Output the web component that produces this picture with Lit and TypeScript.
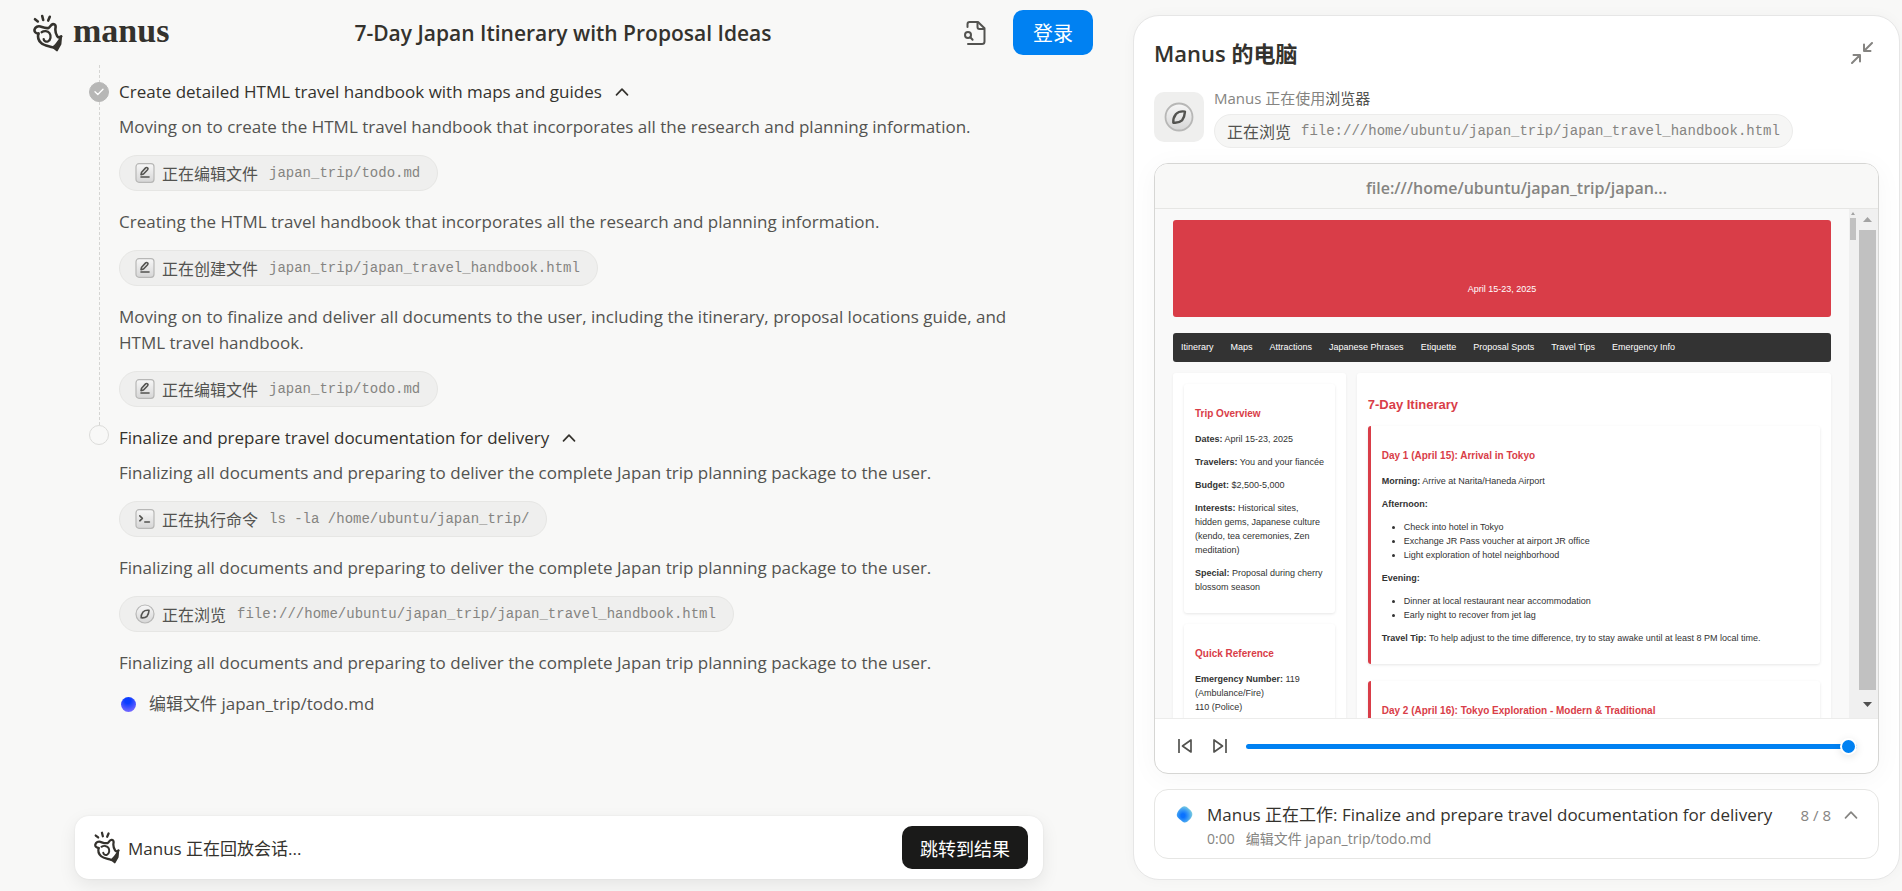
import { LitElement, html, css, svg, nothing } from "lit";
import { customElement, property } from "lit/decorators.js";

const HANDBOOK_URL = "file:///home/ubuntu/japan_trip/japan_travel_handbook.html";
const FINALIZING =
  "Finalizing all documents and preparing to deliver the complete Japan trip planning package to the user.";

type ToolKind = "edit" | "terminal" | "browser";

interface Entry {
  text: string;
  tool?: ToolKind;
  action?: string;
  target?: string;
}

interface Step {
  title: string;
  done: boolean;
  entries: Entry[];
}

const STEPS: Step[] = [
  {
    title: "Create detailed HTML travel handbook with maps and guides",
    done: true,
    entries: [
      {
        text: "Moving on to create the HTML travel handbook that incorporates all the research and planning information.",
        tool: "edit",
        action: "正在编辑文件",
        target: "japan_trip/todo.md",
      },
      {
        text: "Creating the HTML travel handbook that incorporates all the research and planning information.",
        tool: "edit",
        action: "正在创建文件",
        target: "japan_trip/japan_travel_handbook.html",
      },
      {
        text: "Moving on to finalize and deliver all documents to the user, including the itinerary, proposal locations guide, and HTML travel handbook.",
        tool: "edit",
        action: "正在编辑文件",
        target: "japan_trip/todo.md",
      },
    ],
  },
  {
    title: "Finalize and prepare travel documentation for delivery",
    done: false,
    entries: [
      { text: FINALIZING, tool: "terminal", action: "正在执行命令", target: "ls -la /home/ubuntu/japan_trip/" },
      { text: FINALIZING, tool: "browser", action: "正在浏览", target: HANDBOOK_URL },
      { text: FINALIZING },
    ],
  },
];

const NAV = [
  "Itinerary",
  "Maps",
  "Attractions",
  "Japanese Phrases",
  "Etiquette",
  "Proposal Spots",
  "Travel Tips",
  "Emergency Info",
];

const chevronUp = (size: number) => svg`
  <svg width=${size} height=${size} viewBox="0 0 16 16" fill="none" stroke="currentColor" stroke-width="1.7" stroke-linecap="round" stroke-linejoin="round" aria-hidden="true">
    <path d="M2.5 10.8 8 5.2l5.5 5.6" />
  </svg>`;

const hand = (width: number, height: number) => svg`
  <svg width=${width} height=${height} viewBox="0 0 30 38" fill="none" stroke="#34322d" stroke-width="2.6" stroke-linecap="round" stroke-linejoin="round" aria-hidden="true">
    <path d="M2 5.2 4.8 7.4M9.2 2 10.2 6M16.8 2.8 15.2 6.6" />
    <path d="M5.4 19.6C2.6 19.4 1 17.6 1.6 15.4c.7-2.6 3.4-3.6 5.8-2.9 2.6.8 5.4 2.2 8.2 1.4 1.8-.6 2-3.6 4.4-3.8 2.3-.1 2.9 1.6 2.5 3.8-.5 3 .2 5.6 1.7 8.2 1 1.7 2 1.5 4 .3" />
    <path d="M5.4 19.600c-.9 3 .1 7 2.900 9.500 2.800 2.600 7.500 2.800 11.700 4.300" />
    <path d="M28.300 22.400 27.600 30.200 24 36.600 19.600 33.200C22.500 32 25 28 28.300 22.400Z" fill="#34322d" stroke-width="1.6" />
    <path d="M8.600 18.200c2.400-1.600 6.200-1.500 7.900.9 1.900 2.700 1.200 7-1.400 8.200-2.200.8-4.300-.4-4.400-2.200" stroke-width="2.3" />
  </svg>`;

@customElement("tool-icon")
class ToolIcon extends LitElement {
  static styles = css`
    :host {
      display: inline-flex;
    }
  `;

  @property() kind: ToolKind = "edit";
  @property({ type: Number }) size = 20;

  render() {
    const glyphs = {
      edit: svg`<path d="M6 11.600 6.600 9.200 10.600 4.900c.6-.6 1.500-.6 2 0 .5.500.5 1.300 0 1.800L8.500 11Z"/><path d="M6 14h8"/>`,
      terminal: svg`<path d="M4.800 6.800 7.400 9.300 4.800 11.800"/><path d="M9.800 13h4.600"/>`,
      browser: svg`<path d="M8 8C9.500 6.500 12 6.100 14 6.400 13.900 8 13 11 12 12.300 10.500 13.700 8 14 6.200 13.800 6 12 7 9.300 8 8Z"/>`,
    };
    return html`<svg width=${this.size} height=${this.size} viewBox="0 0 20 20" aria-hidden="true">
      <defs>
        <linearGradient id="face" x1="0" y1="0" x2="0" y2="1">
          <stop offset="0" stop-color="#f7f7f7" />
          <stop offset="1" stop-color="#d6d6d6" />
        </linearGradient>
      </defs>
      ${this.kind === "browser"
        ? svg`<circle cx="10" cy="10" r="9" fill="url(#face)" stroke="#b7b7b6" stroke-width="1.2"/>`
        : svg`<rect x="1" y="0.7" width="18" height="18.6" rx="3" fill="url(#face)" stroke="#b7b7b6" stroke-width="1.2"/>`}
      <g fill="none" stroke="#535350" stroke-width="1.6" stroke-linecap="round" stroke-linejoin="round">
        ${glyphs[this.kind]}
      </g>
    </svg>`;
  }
}

@customElement("task-timeline")
class TaskTimeline extends LitElement {
  static styles = css`
    :host {
      display: block;
      color: #535350;
    }
    .step {
      display: grid;
      grid-template-columns: 20px minmax(0, 1fr);
      column-gap: 10px;
    }
    .rail {
      display: flex;
      flex-direction: column;
      align-items: center;
    }
    .dash {
      width: 1px;
      background: repeating-linear-gradient(#d5d5d3 0 3px, transparent 3px 5px);
    }
    .lead {
      height: 17px;
    }
    .rest {
      flex: 1;
    }
    .mark {
      box-sizing: border-box;
      width: 20px;
      height: 20px;
      flex: none;
      border-radius: 50%;
      border: 1px solid #dcdcda;
      display: flex;
      align-items: center;
      justify-content: center;
    }
    .mark.done {
      background: #b7b7b6;
      border-color: #b7b7b6;
    }
    .body.first {
      padding-top: 14px;
    }
    .title {
      display: flex;
      align-items: center;
      gap: 12px;
      padding: 0;
      border: 0;
      background: none;
      font: inherit;
      line-height: 26px;
      color: #34322d;
      cursor: pointer;
      margin-bottom: 9px;
    }
    .text {
      margin: 0 0 15px;
      line-height: 26px;
      max-width: 900px;
    }
    .pill {
      display: flex;
      width: fit-content;
      align-items: center;
      box-sizing: border-box;
      height: 36px;
      max-width: 100%;
      padding: 0 17px 0 15px;
      border: 1px solid #e6e6e4;
      border-radius: 18px;
      background: #efefee;
      font-size: 16px;
      margin-bottom: 18px;
    }
    .action {
      margin: 0 11px 0 7px;
      white-space: nowrap;
    }
    code {
      font: 14px "Liberation Mono", monospace;
      color: #858481;
      white-space: nowrap;
      overflow: hidden;
      text-overflow: ellipsis;
    }
    .live {
      display: flex;
      align-items: center;
      gap: 13px;
      line-height: 26px;
      padding-left: 2px;
    }
    .orb {
      width: 15px;
      height: 15px;
      border-radius: 50%;
      background: radial-gradient(circle at 45% 25%, #0a3dff 20%, #4a55ff 55%, #9a7bff 100%);
    }
  `;

  render() {
    return html`${STEPS.map(
      (step, i) => html`<section class="step">
        <div class="rail">
          ${i === 0 ? html`<div class="dash lead"></div>` : nothing}
          <div class="mark ${step.done ? "done" : ""}">
            ${step.done
              ? svg`<svg width="12" height="12" viewBox="0 0 12 12" fill="none" stroke="#fff" stroke-width="1.3" stroke-linecap="round" stroke-linejoin="round" aria-hidden="true"><path d="M2 5.800 4.800 8.500 10 3.200"/></svg>`
              : nothing}
          </div>
          ${step.done ? html`<div class="dash rest"></div>` : nothing}
        </div>
        <div class="body ${i === 0 ? "first" : ""}">
          <button class="title" type="button" aria-expanded="true">${step.title}${chevronUp(16)}</button>
          ${step.entries.map(
            (e) => html`<p class="text">${e.text}</p>
              ${e.tool
                ? html`<div class="pill">
                    <tool-icon .kind=${e.tool}></tool-icon><span class="action">${e.action}</span
                    ><code>${e.target}</code>
                  </div>`
                : nothing}`
          )}
          ${step.done ? nothing : html`<div class="live"><span class="orb"></span>编辑文件 japan_trip/todo.md</div>`}
        </div>
      </section>`
    )}`;
  }
}

@customElement("handbook-page")
class HandbookPage extends LitElement {
  static styles = css`
    :host {
      display: block;
      font: 9px/14px "Liberation Sans", Arial, sans-serif;
      color: #333;
      background: #f9f9f9;
      padding: 11px 18px 0;
      overflow: hidden;
    }
    .hero {
      height: 97px;
      box-sizing: border-box;
      padding-top: 62px;
      border-radius: 3px;
      background: #d93d48;
      color: #fff;
      text-align: center;
    }
    nav {
      display: flex;
      gap: 17px;
      margin: 16px 0 11px;
      padding: 7px 8px 8px;
      border-radius: 3px;
      background: #333;
    }
    nav a {
      color: #fff;
      text-decoration: none;
      white-space: nowrap;
    }
    .cols {
      display: grid;
      grid-template-columns: 173fr 475fr;
      gap: 11px;
    }
    .side,
    .main {
      background: #fff;
      border-radius: 3px;
      padding: 11px;
      box-shadow: 0 1px 3px rgba(0, 0, 0, 0.06);
    }
    .box {
      border-radius: 3px;
      box-shadow: 0 1px 3px rgba(0, 0, 0, 0.1);
      padding: 22px 8px 19px 11px;
      margin-bottom: 11px;
    }
    .day {
      border-left: 3px solid #d93d48;
      margin-bottom: 17px;
      padding-bottom: 19px;
    }
    h2,
    h3 {
      margin: 0;
      color: #d93d48;
    }
    h2 {
      font-size: 13px;
      line-height: 20px;
      margin: 11px 0;
    }
    h3 {
      font-size: 10px;
      line-height: 16px;
      margin-bottom: 10px;
    }
    p,
    ul {
      margin: 0 0 9px;
    }
    p:last-child {
      margin-bottom: 0;
    }
    ul {
      padding-left: 22px;
    }
  `;

  render() {
    return html`
      <div class="hero">April 15-23, 2025</div>
      <nav>${NAV.map((n) => html`<a href="#">${n}</a>`)}</nav>
      <div class="cols">
        <div class="side">
          <div class="box">
            <h3>Trip Overview</h3>
            <p><b>Dates:</b> April 15-23, 2025</p>
            <p><b>Travelers:</b> You and your fiancée</p>
            <p><b>Budget:</b> $2,500-5,000</p>
            <p><b>Interests:</b> Historical sites, hidden gems, Japanese culture (kendo, tea ceremonies, Zen meditation)</p>
            <p><b>Special:</b> Proposal during cherry blossom season</p>
          </div>
          <div class="box">
            <h3>Quick Reference</h3>
            <p><b>Emergency Number:</b> 119 (Ambulance/Fire)<br />110 (Police)</p>
          </div>
        </div>
        <div class="main">
          <h2>7-Day Itinerary</h2>
          <div class="box day">
            <h3>Day 1 (April 15): Arrival in Tokyo</h3>
            <p><b>Morning:</b> Arrive at Narita/Haneda Airport</p>
            <p><b>Afternoon:</b></p>
            <ul>
              <li>Check into hotel in Tokyo</li>
              <li>Exchange JR Pass voucher at airport JR office</li>
              <li>Light exploration of hotel neighborhood</li>
            </ul>
            <p><b>Evening:</b></p>
            <ul>
              <li>Dinner at local restaurant near accommodation</li>
              <li>Early night to recover from jet lag</li>
            </ul>
            <p><b>Travel Tip:</b> To help adjust to the time difference, try to stay awake until at least 8 PM local time.</p>
          </div>
          <div class="box day">
            <h3>Day 2 (April 16): Tokyo Exploration - Modern &amp; Traditional</h3>
          </div>
        </div>
      </div>
    `;
  }
}

@customElement("computer-panel")
class ComputerPanel extends LitElement {
  static styles = css`
    :host {
      display: flex;
      flex-direction: column;
      box-sizing: border-box;
      padding: 23px 20px 20px;
      background: #fff;
      border: 1px solid #e6e6e6;
      border-radius: 26px;
      box-shadow: 0 0 14px rgba(0, 0, 0, 0.03);
      min-width: 0;
      min-height: 0;
    }
    .head {
      display: flex;
      justify-content: space-between;
      align-items: center;
      margin-bottom: 25px;
    }
    h2 {
      margin: 0;
      font-size: 22px;
      line-height: 28px;
      font-weight: 600;
      color: #34322d;
    }
    button {
      display: inline-flex;
      padding: 0;
      border: 0;
      background: none;
      color: #535350;
      cursor: pointer;
    }
    .shrink {
      margin-right: 6px;
      color: #858481;
    }
    .status {
      display: flex;
      align-items: flex-start;
      gap: 10px;
      margin-bottom: 15px;
    }
    .app {
      width: 50px;
      height: 50px;
      flex: none;
      display: flex;
      align-items: center;
      justify-content: center;
      border-radius: 10px;
      background: #efefee;
    }
    .using {
      font-size: 15px;
      line-height: 20px;
      color: #858481;
      margin-bottom: 6px;
    }
    .using span,
    .action {
      color: #535350;
    }
    .info {
      min-width: 0;
      margin-top: -4px;
    }
    .pill {
      display: flex;
      width: fit-content;
      align-items: center;
      gap: 10px;
      box-sizing: border-box;
      max-width: 100%;
      height: 34px;
      padding: 0 12px;
      border: 1px solid #ececeb;
      border-radius: 17px;
      background: #f6f6f5;
      font-size: 16px;
      white-space: nowrap;
    }
    code {
      font: 14px "Liberation Mono", monospace;
      color: #858481;
      overflow: hidden;
      text-overflow: ellipsis;
    }
    .window {
      flex: 1;
      min-height: 0;
      display: flex;
      flex-direction: column;
      border: 1px solid #d6d6d4;
      border-radius: 14px;
      overflow: hidden;
      box-shadow: 0 4px 28px rgba(0, 0, 0, 0.04);
      background: #fff;
    }
    .address {
      height: 44px;
      line-height: 48px;
      flex: none;
      text-align: center;
      font-size: 16px;
      font-weight: 600;
      color: #858481;
      background: #f8f8f7;
      border-bottom: 1px solid #e6e6e4;
    }
    .view {
      flex: 1;
      min-height: 0;
      display: flex;
    }
    handbook-page {
      flex: 1;
      min-width: 0;
    }
    .bars {
      display: flex;
      background: #f0f0f0;
      gap: 3px;
      padding: 0 2px 0 1px;
    }
    .bar {
      display: flex;
      flex-direction: column;
      align-items: center;
    }
    .inner {
      width: 6px;
      padding-top: 3px;
      gap: 3px;
    }
    .inner .thumb {
      width: 6px;
      height: 22px;
      background: #c1c1c1;
    }
    .outer {
      width: 17px;
      justify-content: space-between;
    }
    .outer .thumb {
      width: 17px;
      flex: 1;
      background: #c1c1c1;
    }
    .arrow {
      height: 21px;
      display: flex;
      align-items: center;
    }
    .arrow.down {
      height: 28px;
      align-items: center;
    }
    .player {
      height: 54px;
      flex: none;
      display: flex;
      align-items: center;
      gap: 18px;
      padding: 0 21px 0 21px;
      border-top: 1px solid #ececeb;
    }
    .player button {
      width: 17px;
      justify-content: center;
    }
    input[type="range"] {
      appearance: none;
      flex: 1;
      min-width: 0;
      height: 18px;
      margin: 0;
      background: none;
    }
    input[type="range"]::-webkit-slider-runnable-track {
      height: 5px;
      border-radius: 3px;
      background: #0081f2;
    }
    input[type="range"]::-webkit-slider-thumb {
      appearance: none;
      box-sizing: border-box;
      width: 17px;
      height: 17px;
      margin-top: -6px;
      border-radius: 50%;
      border: 2px solid #fff;
      background: #0081f2;
      box-shadow: 0 2px 8px rgba(0, 0, 0, 0.1);
    }
    .task {
      flex: none;
      display: grid;
      grid-template-columns: 20px minmax(0, 1fr) auto auto;
      align-items: center;
      margin-top: 15px;
      padding: 12px 19px 8px 20px;
      border: 1px solid #e6e6e4;
      border-radius: 14px;
      background: #fff;
    }
    .name {
      padding-left: 12px;
      font-size: 17px;
      line-height: 26px;
      color: #34322d;
      white-space: nowrap;
    }
    .count {
      font-size: 15px;
      line-height: 26px;
      color: #858481;
      margin-right: 12px;
    }
    .task button {
      color: #858481;
    }
    .meta {
      grid-column: 2;
      padding-left: 12px;
      font-size: 14px;
      line-height: 22px;
      color: #858481;
      display: flex;
      gap: 11px;
    }
  `;

  render() {
    return html`
      <div class="head">
        <h2>Manus 的电脑</h2>
        <button class="shrink" type="button" aria-label="最小化">
          <svg width="22" height="22" viewBox="0 0 22 22" fill="none" stroke="currentColor" stroke-width="2" stroke-linecap="round" stroke-linejoin="round">
            <path d="M21 1 13.500 8.500M13 2.500V9h6.500M1 21 8.500 13.500M9 19.500V13H2.500" />
          </svg>
        </button>
      </div>
      <div class="status">
        <div class="app"><tool-icon .kind=${"browser"} .size=${30}></tool-icon></div>
        <div class="info">
          <div class="using">Manus 正在使用<span>浏览器</span></div>
          <div class="pill"><span class="action">正在浏览</span><code>${HANDBOOK_URL}</code></div>
        </div>
      </div>
      <div class="window">
        <div class="address">file:///home/ubuntu/japan_trip/japan...</div>
        <div class="view">
          <handbook-page></handbook-page>
          <div class="bars">
            <div class="bar inner">
              <svg width="4" height="3" viewBox="0 0 4 3"><path d="M0 3 2 0l2 3z" fill="#a3a3a3" /></svg>
              <div class="thumb"></div>
            </div>
            <div class="bar outer">
              <div class="arrow"><svg width="9" height="5" viewBox="0 0 9 5"><path d="M0 5 4.500 0 9 5z" fill="#a3a3a3" /></svg></div>
              <div class="thumb"></div>
              <div class="arrow down"><svg width="9" height="5" viewBox="0 0 9 5"><path d="M0 0h9L4.500 5z" fill="#505050" /></svg></div>
            </div>
          </div>
        </div>
        <div class="player">
          <button type="button" aria-label="上一步">
            <svg width="16" height="16" viewBox="0 0 16 16" fill="none" stroke="currentColor" stroke-width="1.7" stroke-linejoin="round"><path d="M2 1v14M14 2v12L5.500 8z" /></svg>
          </button>
          <button type="button" aria-label="下一步">
            <svg width="16" height="16" viewBox="0 0 16 16" fill="none" stroke="currentColor" stroke-width="1.7" stroke-linejoin="round"><path d="M14 1v14M2 2v12L10.500 8z" /></svg>
          </button>
          <input type="range" min="0" max="100" value="100" aria-label="回放进度" />
        </div>
      </div>
      <div class="task">
        <svg width="20" height="20" viewBox="0 0 20 20" aria-hidden="true">
          <defs>
            <radialGradient id="pulse" cx="0.4" cy="0.58" r="0.6">
              <stop offset="0.2" stop-color="#0a72ff" />
              <stop offset="0.6" stop-color="#3c9cf5" />
              <stop offset="1" stop-color="#7accdf" />
            </radialGradient>
          </defs>
          <path d="M6.500 2.500C9 .5 11 1 13.500 3.500c2.500 2 4.500 4 3.700 7-.7 2.500-2.700 4.500-5 6.200-2 1.400-4 .8-5.700-1C4.500 14 1.500 12.500 1.800 9.500c.2-2.500 2.500-5 4.700-7Z" fill="url(#pulse)" />
        </svg>
        <div class="name">Manus 正在工作: Finalize and prepare travel documentation for delivery</div>
        <div class="count">8 / 8</div>
        <button type="button" aria-label="展开">${chevronUp(16)}</button>
        <div class="meta"><span>0:00</span><span>编辑文件 japan_trip/todo.md</span></div>
      </div>
    `;
  }
}

@customElement("app-root")
class AppRoot extends LitElement {
  static styles = css`
    :host {
      display: grid;
      grid-template-columns: minmax(0, 1118fr) minmax(0, 767fr);
      grid-template-rows: minmax(0, 1fr);
      column-gap: 15px;
      box-sizing: border-box;
      height: 100vh;
      padding-right: 2px;
      background: #f8f8f7;
      font-family: "Open Sans", "Noto Sans CJK SC", sans-serif;
      font-size: 17px;
      color: #34322d;
      overflow: hidden;
    }
    .chat {
      display: flex;
      flex-direction: column;
      min-height: 0;
    }
    header {
      height: 65px;
      flex: none;
      box-sizing: border-box;
      display: grid;
      grid-template-columns: 1fr auto 1fr;
      align-items: center;
      padding: 0 25px 0 33px;
    }
    .brand {
      display: flex;
      align-items: center;
      gap: 10px;
      color: inherit;
      text-decoration: none;
      font: bold 34px/40px "Liberation Serif", serif;
    }
    .word {
      margin-top: -4px;
    }
    h1 {
      margin: 0;
      font-size: 21px;
      line-height: 30px;
      font-weight: 600;
    }
    .tools {
      display: flex;
      align-items: center;
      justify-content: flex-end;
      gap: 26px;
    }
    button {
      border: 0;
      font-family: inherit;
      cursor: pointer;
      color: #fff;
    }
    .file {
      padding: 0;
      background: none;
      color: #535350;
      display: inline-flex;
    }
    .login {
      width: 80px;
      height: 45px;
      border-radius: 10px;
      background: #0081f2;
      font-size: 20px;
    }
    .scroll {
      flex: 1;
      min-height: 0;
      overflow: hidden;
    }
    .column {
      box-sizing: border-box;
      width: 100%;
      max-width: 968px;
      margin: 0 auto;
    }
    task-timeline {
      padding: 0 14px;
    }
    .replay {
      display: flex;
      align-items: center;
      gap: 8px;
      height: 63px;
      padding: 0 15px 0 19px;
      margin-bottom: 12px;
      border-radius: 14px;
      background: #fff;
      box-shadow: 0 6px 18px rgba(0, 0, 0, 0.08), 0 0 2px rgba(0, 0, 0, 0.08);
    }
    .replay span {
      flex: 1;
    }
    .jump {
      height: 43px;
      padding: 0 18px;
      border-radius: 10px;
      background: #1a1a19;
      font-size: 18px;
    }
    computer-panel {
      margin: 15px 0 11px;
    }
  `;

  render() {
    return html`
      <main class="chat">
        <header>
          <a class="brand" href="#">${hand(30, 38)}<span class="word">manus</span></a>
          <h1>7-Day Japan Itinerary with Proposal Ideas</h1>
          <div class="tools">
            <button class="file" type="button" aria-label="查看文件">
              <svg width="24" height="26" viewBox="0 0 24 26" fill="none" stroke="currentColor" stroke-width="2" stroke-linecap="round" stroke-linejoin="round">
                <path d="M4.500 7V4.200C4.500 2.900 5.300 2 6.700 2H15l6.500 6.300v13.200c0 1.500-1 2.500-2.500 2.500H5" />
                <path d="M14.500 2.500V7c0 1.200.8 2 2 2h4.500" />
                <circle cx="5" cy="15" r="3" />
                <path d="M7.300 17.300 9.600 19.700" />
              </svg>
            </button>
            <button class="login" type="button">登录</button>
          </div>
        </header>
        <div class="scroll">
          <div class="column"><task-timeline></task-timeline></div>
        </div>
        <div class="column replay">
          ${hand(26, 33)}<span>Manus 正在回放会话...</span>
          <button class="jump" type="button">跳转到结果</button>
        </div>
      </main>
      <computer-panel></computer-panel>
    `;
  }
}
